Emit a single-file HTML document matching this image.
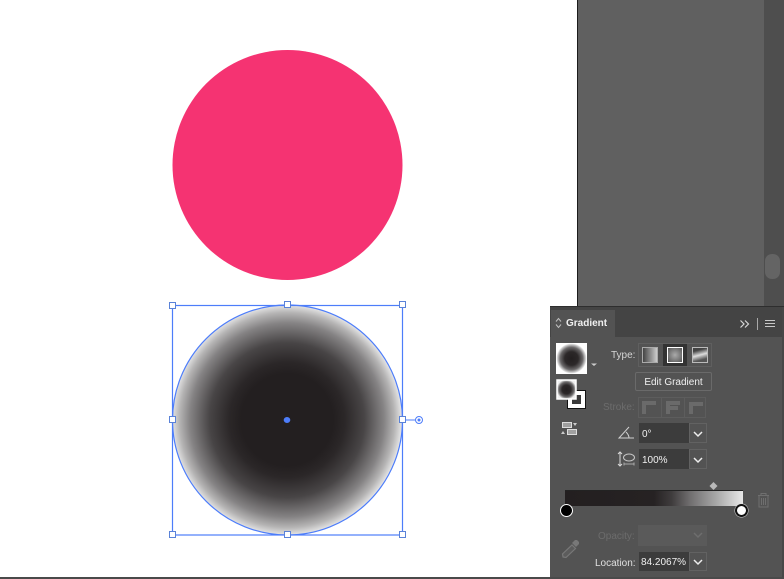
<!DOCTYPE html>
<html><head><meta charset="utf-8">
<style>
html,body{margin:0;padding:0;width:784px;height:579px;overflow:hidden;background:#fff}
body{position:relative;font-family:"Liberation Sans",sans-serif}
.a{position:absolute}
.t{position:absolute;white-space:nowrap;font-size:10px;line-height:12px}
.field{position:absolute;background:#3c3c3c;color:#f0f0f0;font-size:10px;line-height:23px;padding-left:3px;box-sizing:border-box;height:20px;overflow:hidden}
.chev{position:absolute;width:18px;height:20px;border:1px solid #626262;box-sizing:border-box;background:#535353}
</style></head><body>
<div class="a" style="left:0;top:577px;width:784px;height:2px;background:#4a4a4a"></div>
<div class="a" style="left:577px;top:0;width:2px;height:306px;background:#1c1c1c"></div>
<div class="a" style="left:578px;top:0;width:186px;height:306px;background:#606060"></div>
<div class="a" style="left:764px;top:0;width:20px;height:306px;background:#4e4e4e"></div>
<div class="a" style="left:765px;top:254px;width:15px;height:25px;border-radius:7px;background:#646464"></div>

<svg class="a" style="left:0;top:0" width="550" height="579" viewBox="0 0 550 579">
<defs><radialGradient id="g" cx="287" cy="420" r="115.5" gradientUnits="userSpaceOnUse">
<stop offset="0" stop-color="#231f20"/><stop offset=".4" stop-color="#231f20"/><stop offset=".5" stop-color="#2b2728"/><stop offset=".67" stop-color="#484546"/><stop offset=".84" stop-color="#858384"/><stop offset=".93" stop-color="#b5b4b4"/><stop offset="1" stop-color="#e8e8e8"/></radialGradient></defs>
<circle cx="287.500" cy="165" r="115" fill="#f53372"/>
<circle cx="287.500" cy="420" r="115" fill="url(#g)" stroke="#4d7dfa" stroke-width="1.200"/>
<rect x="172.500" y="305.500" width="230" height="229.500" fill="none" stroke="#4d7dfa" stroke-width="1.200"/>
<g fill="#fff" stroke="#5a82d8" stroke-width="1">
<rect x="169.500" y="302.500" width="6" height="6"/><rect x="284.500" y="301.500" width="6" height="6"/><rect x="399.500" y="301.500" width="6" height="6"/>
<rect x="169.500" y="416.500" width="6" height="6"/><rect x="399.500" y="416.500" width="6" height="6"/>
<rect x="169.500" y="531.500" width="6" height="6"/><rect x="284.500" y="531.500" width="6" height="6"/><rect x="399.500" y="531.500" width="6" height="6"/></g>
<line x1="405" y1="420" x2="415" y2="420" stroke="#4d7dfa"/>
<circle cx="419" cy="420" r="3.500" fill="#fff" stroke="#4d7dfa"/><circle cx="419" cy="420" r="1.500" fill="#4d7dfa"/>
<ellipse cx="287" cy="420" rx="3.300" ry="3" fill="#4d7dfa"/>
</svg>

<div class="a" style="left:550px;top:306px;width:234px;height:271px;background:#535353;border-top:1px solid #2e2e2e;box-sizing:border-box"></div>
<div class="a" style="left:550px;top:307px;width:234px;height:30px;background:#444"></div>
<div class="a" style="left:551px;top:310px;width:64px;height:27px;background:#535353"></div>
<div class="a" style="left:782px;top:307px;width:2px;height:270px;background:#474747"></div>
<div class="t" style="left:566px;top:318px;font-size:10px;font-weight:bold;color:#f0f0f0">Gradient</div>
<svg class="a" style="left:555px;top:317px" width="7" height="12"><path d="M1 4.500L3.500 1.500L6 4.500M1 7.500L3.500 10.500L6 7.500" fill="none" stroke="#c0c0c0"/></svg>
<svg class="a" style="left:738px;top:316px" width="40" height="16"><path d="M2.500 4.500L6 8L2.500 11.500M7 4.500L10.500 8L7 11.500" fill="none" stroke="#d8d8d8" stroke-width="1.200"/><line x1="19.500" y1="2" x2="19.500" y2="14" stroke="#a8a8a8"/><path d="M27 4.500H37M27 7.500H37M27 10.500H37" stroke="#c8c8c8"/></svg>

<!-- swatches -->
<svg class="a" style="left:550px;top:340px" width="50" height="100">
<defs>
<radialGradient id="s"><stop offset="0" stop-color="#231f20"/><stop offset=".45" stop-color="#2c2829"/><stop offset=".75" stop-color="#6a6869"/><stop offset="1" stop-color="#f4f4f4"/></radialGradient>
</defs>
<rect x="6" y="3" width="31" height="31" fill="#fff"/><circle cx="21.500" cy="18.500" r="15" fill="url(#s)"/>
<path d="M41 23.500L47 23.500L44 26Z" fill="#ccc"/>
<rect x="17.500" y="50.500" width="18" height="18" fill="#fff" stroke="#111"/><rect x="22" y="55" width="9" height="9" fill="#3a3a3a"/>
<rect x="7" y="40" width="19" height="19" fill="#f0f0f0"/><circle cx="16.500" cy="49.500" r="10" fill="url(#s)"/><rect x="7" y="40" width="19" height="19" fill="none" stroke="#fff" stroke-width="1.500"/>
<rect x="12.500" y="82.500" width="9" height="5" fill="#a0a0a0" stroke="#ddd"/><path d="M23 83L27 83L25 86Z" fill="#ccc"/>
<rect x="17.500" y="89.500" width="9" height="5" fill="#a0a0a0" stroke="#ddd"/><path d="M11 94L15 94L13 91Z" fill="#ccc"/>
</svg>

<!-- type -->
<div class="t" style="left:611px;top:350px;color:#d6d6d6">Type:</div>
<div class="a" style="left:638px;top:343px;width:74px;height:24px;border:1px solid #5f5f5f;box-sizing:border-box"></div>
<div class="a" style="left:663px;top:344px;width:24px;height:22px;background:#333"></div>
<div class="a" style="left:642px;top:347px;width:16px;height:16px;background:linear-gradient(90deg,#444,#ccc);border:1px solid #aaa;box-sizing:border-box"></div>
<div class="a" style="left:667px;top:347px;width:16px;height:16px;background:radial-gradient(circle,#aaa,#555);border:1px solid #fff;box-sizing:border-box"></div>
<div class="a" style="left:692px;top:347px;width:16px;height:16px;background:linear-gradient(165deg,#444 20%,#ddd 50%,#555 80%);border:1px solid #bbb;box-sizing:border-box"></div>

<div class="a" style="left:635px;top:372px;width:77px;height:19px;border:1px solid #6a6a6a;border-radius:2px;box-sizing:border-box"></div>
<div class="t" style="left:635px;top:377px;width:77px;text-align:center;color:#f0f0f0">Edit Gradient</div>

<!-- stroke -->
<div class="t" style="left:603px;top:402px;color:#6c6c6c">Stroke:</div>
<div class="a" style="left:638px;top:397px;width:68px;height:21px;border:1px solid #5d5d5d;box-sizing:border-box"></div>
<svg class="a" style="left:638px;top:397px" width="68" height="21"><g fill="none" stroke="#6a6a6a" stroke-width="4"><path d="M6 17V6H18"/><path d="M30 17V6H42M32 11H40"/><path d="M53 17V7H65"/></g><path d="M23.500 1V20M46.500 1V20" stroke="#5d5d5d"/></svg>

<!-- angle -->
<svg class="a" style="left:617px;top:425px" width="18" height="15"><path d="M17 13H2L12 2M9 7Q12 10 12 13" fill="none" stroke="#d0d0d0"/></svg>
<div class="field" style="left:639px;top:423px;width:50px">0°</div>
<div class="chev" style="left:689px;top:423px"></div>
<svg class="a" style="left:692px;top:430px" width="12" height="8"><path d="M2 2L6 6L10 2" fill="none" stroke="#eee" stroke-width="1.500"/></svg>

<!-- aspect -->
<svg class="a" style="left:617px;top:451px" width="20" height="16"><path d="M3 1V15M1 3L3 1L5 3M1 13L3 15L5 13" fill="none" stroke="#d8d8d8"/><ellipse cx="12" cy="6.500" rx="5.500" ry="3.500" fill="none" stroke="#c8c8c8"/><path d="M7 13H17M7 11.500V14.500M17 11.500V14.500" stroke="#aaa" fill="none"/></svg>
<div class="field" style="left:639px;top:449px;width:50px">100%</div>
<div class="chev" style="left:689px;top:449px"></div>
<svg class="a" style="left:692px;top:456px" width="12" height="8"><path d="M2 2L6 6L10 2" fill="none" stroke="#eee" stroke-width="1.500"/></svg>

<!-- gradient bar -->
<svg class="a" style="left:708px;top:481px" width="12" height="11"><path d="M5.500 1L9.500 5L5.500 9L1.500 5Z" fill="#b8b8b8"/></svg>
<div class="a" style="left:565px;top:490px;width:178px;height:16px;background:linear-gradient(90deg,#231f20 0%,#262223 50%,#3f3c3d 60%,#6f6d6e 70%,#a8a8a8 85%,#e8e8e8 100%);border-top:1px solid #222;box-sizing:border-box"></div>
<svg class="a" style="left:755px;top:492px" width="18" height="16"><path d="M3 3.500H14M6 3.500V1.500H11V3.500M4 4V15H13V4M6.500 6V13M8.500 6V13M10.500 6V13" fill="none" stroke="#6f6f6f"/></svg>
<div class="a" style="left:560px;top:504px;width:13px;height:13px;border-radius:50%;background:#000;border:1.500px solid #fff;box-sizing:border-box"></div>
<div class="a" style="left:735px;top:504px;width:13px;height:13px;border-radius:50%;background:#fff;border:2px solid #111;box-shadow:0 0 0 .5px #ddd;box-sizing:border-box"></div>

<!-- opacity -->
<div class="t" style="left:598px;top:531px;color:#6c6c6c">Opacity:</div>
<div class="a" style="left:638px;top:525px;width:69px;height:21px;background:#5a5a5a"></div>
<svg class="a" style="left:692px;top:531px" width="12" height="8"><path d="M2 2L6 6L10 2" fill="none" stroke="#6e6e6e" stroke-width="1.500"/></svg>
<svg class="a" style="left:560px;top:538px" width="22" height="22"><path d="M3 19L2.500 16L12 7L15.500 10.500L6 19.500Z" fill="#5c5c5c" stroke="#787878" stroke-width="1.200"/><path d="M12 5L15 2H17L19 4V6L16 9Z" fill="#787878"/></svg>

<!-- location -->
<div class="t" style="left:595px;top:558px;color:#e0e0e0">Location:</div>
<div class="field" style="left:639px;top:552px;width:50px;height:19px;padding-left:2px;line-height:21px">84.2067%</div>
<div class="chev" style="left:689px;top:552px;height:19px"></div>
<svg class="a" style="left:692px;top:558px" width="12" height="8"><path d="M2 2L6 6L10 2" fill="none" stroke="#eee" stroke-width="1.500"/></svg>
</body></html>
